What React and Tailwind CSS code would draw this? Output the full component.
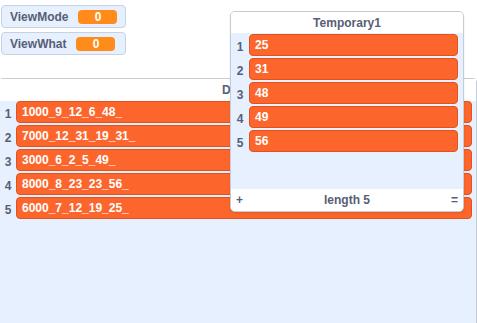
import React from "react";

const font = { fontFamily: '"Liberation Sans", Arial, Helvetica, sans-serif' };

function VarMonitor({ label, value, top }) {
  return (
    <div
      className="absolute left-[1px] flex h-[23px] w-[125px] items-center rounded-[4px] border border-[#c6d2e2] bg-[#e6f0ff] pl-[8px] text-[12px] font-bold text-[#575e75]"
      style={{ top }}
    >
      <span>{label}</span>
      <span className="ml-[10px] flex h-[14px] w-[39px] items-center justify-center rounded-[4px] bg-[#ff8c1a] text-white">
        {value}
      </span>
    </div>
  );
}

function Item({ i, text, idxW }) {
  return (
    <div className="flex h-[24px] items-start">
      <div className={`${idxW} pt-[4px] text-center text-[12px] font-bold text-[#575e75]`}>{i}</div>
      <div className="flex h-[22px] flex-1 items-center rounded-[4px] border border-[#e0531f] bg-[#fc662c] pl-[5px] text-[12px] font-bold text-white">
        {text}
      </div>
    </div>
  );
}

export default function App() {
  const data = [
    "1000_9_12_6_48_",
    "7000_12_31_19_31_",
    "3000_6_2_5_49_",
    "8000_8_23_23_56_",
    "6000_7_12_19_25_",
  ];
  const temp = ["25", "31", "48", "49", "56"];
  return (
    <div className="relative h-[323px] w-[477px] overflow-hidden bg-white" style={font}>
      <VarMonitor label="ViewMode" value="0" top={5} />
      <VarMonitor label="ViewWhat" value="0" top={32} />

      {/* Data list */}
      <div className="absolute left-[-1px] top-[78px] flex h-[260px] w-[478px] flex-col rounded-[4px] border border-[#c6ccd6] bg-[#e6f0ff]">
        <div className="flex h-[22px] shrink-0 items-center justify-center bg-white pr-[6px] text-[12px] font-bold text-[#575e75]">
          Data
        </div>
        <div className="flex flex-col pr-[4px]">
          {data.map((t, k) => (
            <Item key={k} i={k + 1} text={t} idxW="w-[16px]" />
          ))}
        </div>
      </div>

      {/* Temporary1 list */}
      <div className="absolute left-[230px] top-[11px] flex h-[201px] w-[234px] flex-col overflow-hidden rounded-[5px] border border-[#c6ccd6] bg-[#e6f0ff] shadow-[0_1px_2px_rgba(0,0,0,0.12)]">
        <div className="flex h-[21px] shrink-0 items-center justify-center bg-white text-[12px] font-bold text-[#575e75]">
          Temporary1
        </div>
        <div className="flex flex-1 flex-col pr-[5px] pt-[1px]">
          {temp.map((t, k) => (
            <Item key={k} i={k + 1} text={t} idxW="w-[18px]" />
          ))}
        </div>
        <div className="flex h-[22px] shrink-0 items-center justify-between bg-white px-[5px] text-[12px] font-bold text-[#575e75]">
          <span>+</span>
          <span>length 5</span>
          <span>=</span>
        </div>
      </div>
    </div>
  );
}
